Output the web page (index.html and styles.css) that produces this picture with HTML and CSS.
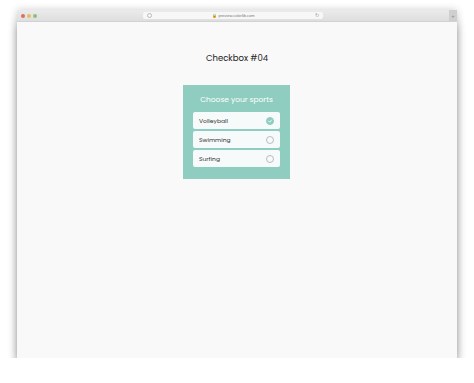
FILE: index.html
```html
<!DOCTYPE html>
<html>
<head>
    <meta charset="UTF-8">
    <title>Checkbox #04</title>
    <link rel="stylesheet" href="styles.css">
</head>
<body>
    <div class="window">
        <div class="toolbar">
            <div class="dots">
                <span class="dot dot-red"></span>
                <span class="dot dot-yellow"></span>
                <span class="dot dot-green"></span>
            </div>
            <div class="url-bar">
                <span class="url-icon"></span>
                <span class="url-text">&#128274; preview.colorlib.com</span>
                <span class="url-reload">&#8635;</span>
            </div>
            <div class="tool-btn">+</div>
        </div>
        <div class="page">
            <h1 class="page-title">Checkbox #04</h1>
            <div class="card">
                <div class="card-title">Choose your sports</div>
                <div class="option">
                    <span class="option-name">Volleyball</span>
                    <span class="check checked">
                        <svg viewBox="0 0 10 10" width="6" height="6"><path d="M2.5 5.2 L4.3 7 L7.6 3.3" fill="none" stroke="#fff" stroke-width="1.4" stroke-linecap="round" stroke-linejoin="round"/></svg>
                    </span>
                </div>
                <div class="option">
                    <span class="option-name">Swimming</span>
                    <span class="check"></span>
                </div>
                <div class="option">
                    <span class="option-name">Surfing</span>
                    <span class="check"></span>
                </div>
            </div>
        </div>
    </div>
</body>
</html>
```

FILE: styles.css
```css
body {
    margin: 0;
    padding: 10px 17px 0;
    background: #ffffff;
    font-family: 'Poppins', 'Open Sans', sans-serif;
}

.window {
    width: 440px;
    height: 348px;
    display: flex;
    flex-direction: column;
    background: #f9f9f9;
    box-shadow: 0 12px 10px -2px rgba(0, 0, 0, 0.45), 0 0 8px rgba(0, 0, 0, 0.2);
}

.toolbar {
    height: 11px;
    flex: none;
    display: flex;
    align-items: center;
    padding: 0 0 0 4px;
    background: linear-gradient(#ebebeb, #dedede);
    border-bottom: 1px solid #d2d2d2;
}

.dots {
    display: flex;
    gap: 2px;
    width: 122px;
}

.dot {
    width: 4px;
    height: 4px;
    border-radius: 50%;
}

.dot-red { background: #e06b63; }
.dot-yellow { background: #e2c06a; }
.dot-green { background: #8ec07c; }

.url-bar {
    width: 180px;
    height: 7px;
    display: flex;
    align-items: center;
    justify-content: space-between;
    padding: 0 4px;
    box-sizing: border-box;
    background: #f7f7f7;
    border-radius: 2px;
    font-family: 'Liberation Sans', sans-serif;
    font-size: 4px;
    line-height: 7px;
    color: #777777;
}

.url-icon {
    width: 3px;
    height: 3px;
    border: 0.5px solid #bbbbbb;
    border-radius: 50%;
}

.url-reload {
    font-size: 5px;
    color: #999999;
}

.tool-btn {
    margin-left: auto;
    width: 8px;
    height: 11px;
    display: flex;
    align-items: center;
    justify-content: center;
    background: #cfcfcf;
    font-family: 'Liberation Sans', sans-serif;
    font-size: 5px;
    color: #888888;
}

.page {
    flex: 1;
    text-align: center;
}

.page-title {
    margin: 0;
    padding-top: 30px;
    font-size: 8.5px;
    line-height: 12px;
    font-weight: 400;
    color: #222222;
}

.card {
    display: inline-block;
    vertical-align: top;
    margin: 21px 0 0 -1px;
    width: 107px;
    box-sizing: border-box;
    padding: 10px 10px 12px;
    background: #8ecdbf;
    text-align: left;
}

.card-title {
    text-align: center;
    font-size: 7.5px;
    line-height: 10px;
    color: #ffffff;
    margin-bottom: 7px;
}

.option {
    height: 17px;
    margin-top: 2px;
    display: flex;
    align-items: center;
    justify-content: space-between;
    padding: 0 6px;
    background: #f6fafa;
    border-radius: 2px;
    font-size: 6px;
    line-height: 8px;
    color: #333333;
}

.check {
    width: 6px;
    height: 6px;
    border-radius: 50%;
    border: 1px solid #bcbcbc;
    display: flex;
    align-items: center;
    justify-content: center;
}

.check.checked {
    background: #8ecdbf;
    border-color: #8ecdbf;
}
```
